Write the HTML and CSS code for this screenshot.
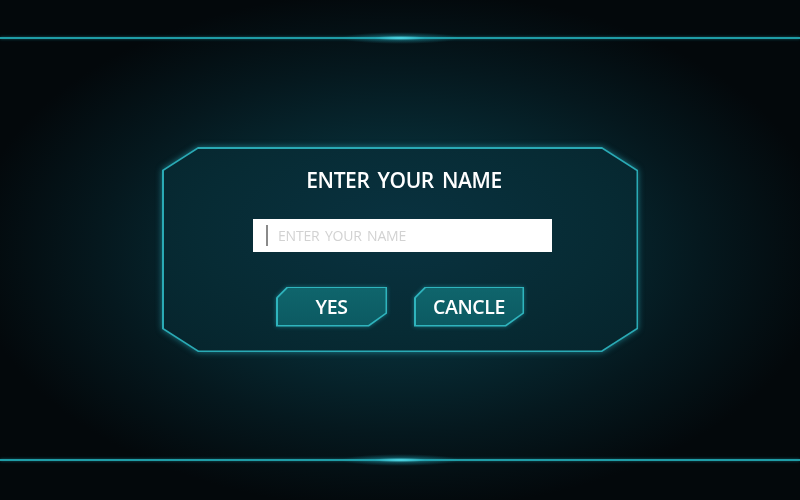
FILE: index.html
```html
<!DOCTYPE html>
<html lang="en">
<head>
    <meta charset="UTF-8">
    <meta name="viewport" content="width=device-width, initial-scale=1.0">
    <title>Enter Your Name</title>
    <link rel="stylesheet" href="styles.css">
</head>
<body>
    <div class="screen">
        <div class="glow-line top-line"></div>

        <div class="panel-frame">
            <div class="panel">
                <div class="panel-inner">
                    <h1 class="title">ENTER YOUR NAME</h1>
                    <label class="name-field">
                        <span class="caret"></span>
                        <input type="text" id="nameInput" placeholder="ENTER YOUR NAME">
                    </label>
                    <div class="actions">
                        <button class="hud-btn" id="yesBtn"><span>YES</span></button>
                        <button class="hud-btn" id="cancelBtn"><span>CANCLE</span></button>
                    </div>
                </div>
            </div>
        </div>

        <div class="glow-line bottom-line"></div>
    </div>
</body>
</html>
```

FILE: styles.css
```css
html, body {
    margin: 0;
    padding: 0;
}

body {
    width: 800px;
    height: 500px;
    overflow: hidden;
    font-family: "Open Sans", "Noto Sans", sans-serif;
    background-color: #03080a;
}

.screen {
    width: 800px;
    height: 500px;
    display: flex;
    flex-direction: column;
    align-items: center;
    box-sizing: border-box;
    padding-top: 37px;
    background:
        radial-gradient(ellipse 430px 260px at 400px 250px, #0a3743 0%, #072a33 40%, #05181e 70%, #03080b 100%);
}

/* thin cyan rule with a hot spot in the middle */
.glow-line {
    width: 100%;
    height: 2px;
    background: #1f9ca6;
    box-shadow: 0 0 3px rgba(40, 190, 205, 0.5);
    position: relative;
}

.glow-line::after {
    content: "";
    position: absolute;
    left: 340px;
    top: -5px;
    width: 120px;
    height: 12px;
    background: radial-gradient(ellipse at center, rgba(90, 230, 245, 0.85) 0%, rgba(40, 180, 200, 0.3) 30%, rgba(20, 120, 140, 0) 70%);
}

.top-line {
    margin-bottom: 108px;
}

.bottom-line {
    margin-top: 107px;
}

.panel-frame {
    filter: drop-shadow(0 0 3px rgba(45, 190, 205, 0.55));
}

.panel {
    width: 476px;
    height: 205px;
    box-sizing: border-box;
    padding: 1.5px;
    background: #2aaab5;
    clip-path: polygon(36px 0, calc(100% - 36px) 0, 100% 23px, 100% calc(100% - 23px), calc(100% - 36px) 100%, 36px 100%, 0 calc(100% - 23px), 0 23px);
}

.panel-inner {
    height: 100%;
    box-sizing: border-box;
    padding-top: 16px;
    display: flex;
    flex-direction: column;
    align-items: center;
    background: radial-gradient(ellipse at 50% 40%, #093240 0%, #072b34 60%, #06242c 100%);
    clip-path: polygon(35.2px 0, calc(100% - 35.2px) 0, 100% 22.4px, 100% calc(100% - 22.4px), calc(100% - 35.2px) 100%, 35.2px 100%, 0 calc(100% - 22.4px), 0 22.4px);
}

.title {
    margin: 0 0 0 8px;
    font-size: 21px;
    line-height: 30px;
    font-weight: 600;
    color: #ffffff;
    word-spacing: 3px;
    letter-spacing: -0.4px;
}

.name-field {
    margin: 24px 0 0 5px;
    width: 299px;
    height: 33px;
    box-sizing: border-box;
    padding-left: 13px;
    display: flex;
    align-items: center;
    gap: 10px;
    background: #ffffff;
}

.caret {
    width: 2px;
    height: 21px;
    background: #8a8a8a;
}

.name-field input {
    flex: 1;
    border: none;
    outline: none;
    padding: 0;
    background: transparent;
    font-family: "Open Sans", "Noto Sans", sans-serif;
    font-size: 14px;
    word-spacing: 2px;
    letter-spacing: -0.2px;
    color: #333;
}

.name-field input::placeholder {
    color: #d2d2d2;
}

.actions {
    margin-top: 35px;
    display: flex;
    gap: 27px;
    filter: drop-shadow(0 0 2px rgba(45, 190, 205, 0.45));
}

.hud-btn {
    width: 111px;
    height: 40px;
    padding: 1.5px;
    border: none;
    cursor: pointer;
    background: #2fb4bd;
    clip-path: polygon(11px 0, 100% 0, 100% calc(100% - 13px), calc(100% - 18px) 100%, 0 100%, 0 11px);
}

.hud-btn span {
    display: flex;
    align-items: center;
    justify-content: center;
    height: 100%;
    font-family: "Open Sans", "Noto Sans", sans-serif;
    font-size: 19.5px;
    font-weight: 600;
    letter-spacing: -0.4px;
    color: #ffffff;
    background: linear-gradient(#0f656c, #0c5a62);
    clip-path: polygon(10.4px 0, 100% 0, 100% calc(100% - 12.3px), calc(100% - 17.3px) 100%, 0 100%, 0 10.4px);
}

.hud-btn:hover span {
    background: linear-gradient(#13737b, #0e646c);
}

#cancelBtn {
    width: 110px;
}
```
